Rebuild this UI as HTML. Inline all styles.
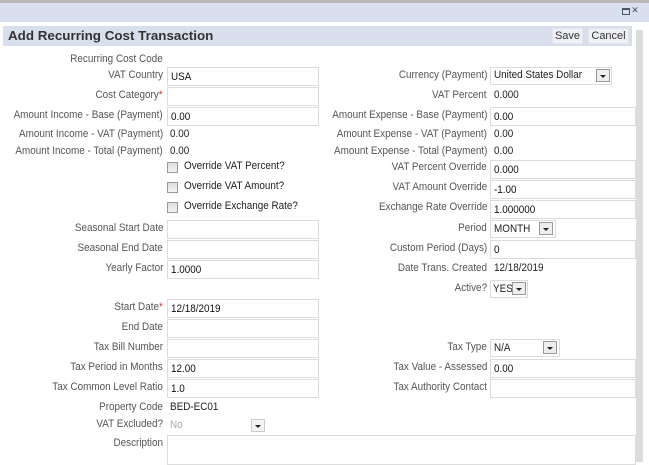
<!DOCTYPE html>
<html><head><meta charset="utf-8"><style>
*{margin:0;padding:0;box-sizing:border-box}
body{width:649px;height:462px;overflow:hidden;background:#fff;font-family:"Liberation Sans",sans-serif;font-size:11px;color:#222;position:relative}
.a{position:absolute;white-space:nowrap;transform:scaleX(0.9);transform-origin:left center}
.b{position:absolute}
.l{position:absolute;text-align:right;color:#555;white-space:nowrap;transform:scaleX(0.9);transform-origin:right center}
.i{position:absolute;height:19px;border:1px solid #dcdcdc;background:#fff;padding:3px 3px;color:#111;white-space:nowrap}
.i span{display:inline-block;transform:scaleX(0.9);transform-origin:left center}
.dd{position:absolute;width:14px;height:13px;border:1px solid #999;background:#eee}
.dd:after{content:"";position:absolute;left:3px;top:5px;border-left:3px solid transparent;border-right:3px solid transparent;border-top:3px solid #222}
.cb{position:absolute;width:11px;height:11px;border:1px solid #999;background:linear-gradient(#ddd,#f4f4f4)}
.btn{position:absolute;top:28px;height:16px;background:#eef0f6;border:1px solid #e4e6ee;color:#333;font-size:11px;text-align:center;line-height:14px}
</style></head><body>
<div class="b" style="left:0;top:0;width:649px;height:3px;background:#b9b9b9"></div>
<div class="b" style="left:0;top:3px;width:649px;height:19px;background:#d9dfee"></div>
<div class="b" style="left:622px;top:8px;width:8px;height:7px;border:1px solid #456;border-top-width:2px"></div>
<div class="b" style="left:631px;top:6px;width:8px;height:9px;font-size:9px;line-height:9px;color:#456;text-align:center">✕</div>
<div class="b" style="left:3px;top:26px;width:629px;height:20px;background:#d8deeb"></div>
<div class="a" style="left:8px;top:28px;font-size:13px;font-weight:bold;color:#333;transform:scaleX(1.03)">Add Recurring Cost Transaction</div>
<div class="btn" style="left:552px;width:31px">Save</div>
<div class="btn" style="left:588px;width:41px">Cancel</div>
<div class="b" style="left:636px;top:30px;width:7px;height:432px;background:#dcdcdc"></div>

<div class="l" style="right:486px;top:53px">Recurring Cost Code</div>
<div class="l" style="right:486px;top:69px">VAT Country</div><div class="i" style="left:167px;top:67px;width:152px"><span>USA</span></div>
<div class="l" style="right:486px;top:89px">Cost Category<span style="color:#c33">*</span></div><div class="i" style="left:167px;top:87px;width:152px"></div>
<div class="l" style="right:486px;top:109px">Amount Income - Base (Payment)</div><div class="i" style="left:167px;top:107px;width:152px"><span>0.00</span></div>
<div class="l" style="right:486px;top:128px">Amount Income - VAT (Payment)</div><div class="a" style="left:170px;top:128px">0.00</div>
<div class="l" style="right:486px;top:145px">Amount Income - Total (Payment)</div><div class="a" style="left:170px;top:145px">0.00</div>
<div class="cb" style="left:167px;top:162px"></div><div class="a" style="left:184px;top:160px">Override VAT Percent?</div>
<div class="cb" style="left:167px;top:182px"></div><div class="a" style="left:184px;top:180px">Override VAT Amount?</div>
<div class="cb" style="left:167px;top:202px"></div><div class="a" style="left:184px;top:200px">Override Exchange Rate?</div>
<div class="l" style="right:486px;top:222px">Seasonal Start Date</div><div class="i" style="left:167px;top:220px;width:152px"></div>
<div class="l" style="right:486px;top:242px">Seasonal End Date</div><div class="i" style="left:167px;top:240px;width:152px"></div>
<div class="l" style="right:486px;top:262px">Yearly Factor</div><div class="i" style="left:167px;top:260px;width:152px"><span>1.0000</span></div>
<div class="l" style="right:486px;top:301px">Start Date<span style="color:#c33">*</span></div><div class="i" style="left:167px;top:299px;width:152px"><span>12/18/2019</span></div>
<div class="l" style="right:486px;top:321px">End Date</div><div class="i" style="left:167px;top:319px;width:152px"></div>
<div class="l" style="right:486px;top:341px">Tax Bill Number</div><div class="i" style="left:167px;top:339px;width:152px"></div>
<div class="l" style="right:486px;top:361px">Tax Period in Months</div><div class="i" style="left:167px;top:359px;width:152px"><span>12.00</span></div>
<div class="l" style="right:486px;top:381px">Tax Common Level Ratio</div><div class="i" style="left:167px;top:379px;width:152px"><span>1.0</span></div>
<div class="l" style="right:486px;top:401px">Property Code</div><div class="a" style="left:170px;top:401px">BED-EC01</div>
<div class="l" style="right:486px;top:418px">VAT Excluded?</div><div class="a" style="left:170px;top:419px;color:#aaa">No</div>
<div class="dd" style="left:251px;top:419px;border-color:#ccc;background:#f4f4f4"></div>
<div class="l" style="right:486px;top:437px">Description</div><div class="i" style="left:167px;top:435px;width:469px;height:30px"></div>

<div class="l" style="right:162px;top:69px">Currency (Payment)</div><div class="a" style="left:494px;top:69px">United States Dollar</div><div class="dd" style="left:596px;top:69px"></div>
<div class="b" style="left:490px;top:67px;width:122px;height:18px;border:1px solid #dcdcdc"></div>
<div class="l" style="right:162px;top:89px">VAT Percent</div><div class="a" style="left:494px;top:89px">0.000</div>
<div class="l" style="right:162px;top:109px">Amount Expense - Base (Payment)</div><div class="i" style="left:490px;top:107px;width:146px"><span>0.00</span></div>
<div class="l" style="right:162px;top:128px">Amount Expense - VAT (Payment)</div><div class="a" style="left:494px;top:128px">0.00</div>
<div class="l" style="right:162px;top:145px">Amount Expense - Total (Payment)</div><div class="a" style="left:494px;top:145px">0.00</div>
<div class="l" style="right:162px;top:161px">VAT Percent Override</div><div class="i" style="left:490px;top:160px;width:146px"><span>0.000</span></div>
<div class="l" style="right:162px;top:181px">VAT Amount Override</div><div class="i" style="left:490px;top:180px;width:146px"><span>-1.00</span></div>
<div class="l" style="right:162px;top:201px">Exchange Rate Override</div><div class="i" style="left:490px;top:200px;width:146px"><span>1.000000</span></div>
<div class="l" style="right:162px;top:222px">Period</div><div class="a" style="left:494px;top:223px">MONTH</div><div class="dd" style="left:539px;top:222px"></div>
<div class="b" style="left:490px;top:220px;width:66px;height:18px;border:1px solid #dcdcdc"></div>
<div class="l" style="right:162px;top:242px">Custom Period (Days)</div><div class="i" style="left:490px;top:240px;width:146px"><span>0</span></div>
<div class="l" style="right:162px;top:262px">Date Trans. Created</div><div class="a" style="left:494px;top:262px">12/18/2019</div>
<div class="l" style="right:162px;top:282px">Active?</div><div class="a" style="left:493px;top:283px">YES</div><div class="dd" style="left:512px;top:282px"></div>
<div class="b" style="left:490px;top:280px;width:38px;height:18px;border:1px solid #dcdcdc"></div>
<div class="l" style="right:162px;top:341px">Tax Type</div><div class="a" style="left:494px;top:342px">N/A</div><div class="dd" style="left:543px;top:341px"></div>
<div class="b" style="left:490px;top:339px;width:70px;height:18px;border:1px solid #dcdcdc"></div>
<div class="l" style="right:162px;top:361px">Tax Value - Assessed</div><div class="i" style="left:490px;top:359px;width:146px"><span>0.00</span></div>
<div class="l" style="right:162px;top:381px">Tax Authority Contact</div><div class="i" style="left:490px;top:379px;width:146px"></div>
</body></html>
